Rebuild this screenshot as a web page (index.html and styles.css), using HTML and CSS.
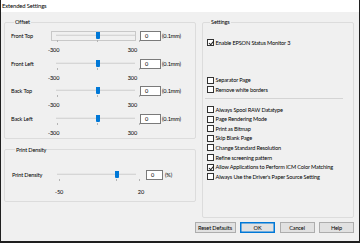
FILE: index.html
```html
<!DOCTYPE html>
<html lang="en">
<head>
  <meta charset="UTF-8">
  <title>Extended Settings</title>
  <link rel="stylesheet" href="styles.css">
</head>
<body>

  <div class="window">
    <div class="titlebar">Extended Settings</div>

    <div class="content">
      <div class="panels">
        <div class="left-col">

          <fieldset class="group offset">
            <legend>Offset</legend>

            <div class="slider-row">
              <span class="row-label">Front Top</span>
              <div class="slider focused">
                <div class="track"></div>
                <span class="tick" style="left:5px"></span>
                <span class="tick" style="left:45px"></span>
                <span class="tick" style="left:87px"></span>
                <div class="thumb" style="left:44px"></div>
              </div>
              <div class="numbox">0</div>
              <span class="unit">(0.1mm)</span>
              <div class="scale"><span>-300</span><span>300</span></div>
            </div>

            <div class="slider-row">
              <span class="row-label">Front Left</span>
              <div class="slider">
                <div class="track"></div>
                <span class="tick" style="left:5px"></span>
                <span class="tick" style="left:45px"></span>
                <span class="tick" style="left:87px"></span>
                <div class="thumb" style="left:44px"></div>
              </div>
              <div class="numbox">0</div>
              <span class="unit">(0.1mm)</span>
              <div class="scale"><span>-300</span><span>300</span></div>
            </div>

            <div class="slider-row">
              <span class="row-label">Back Top</span>
              <div class="slider">
                <div class="track"></div>
                <span class="tick" style="left:5px"></span>
                <span class="tick" style="left:45px"></span>
                <span class="tick" style="left:87px"></span>
                <div class="thumb" style="left:44px"></div>
              </div>
              <div class="numbox">0</div>
              <span class="unit">(0.1mm)</span>
              <div class="scale"><span>-300</span><span>300</span></div>
            </div>

            <div class="slider-row">
              <span class="row-label">Back Left</span>
              <div class="slider">
                <div class="track"></div>
                <span class="tick" style="left:5px"></span>
                <span class="tick" style="left:45px"></span>
                <span class="tick" style="left:87px"></span>
                <div class="thumb" style="left:44px"></div>
              </div>
              <div class="numbox">0</div>
              <span class="unit">(0.1mm)</span>
              <div class="scale"><span>-300</span><span>300</span></div>
            </div>
          </fieldset>

          <fieldset class="group density">
            <legend>Print Density</legend>

            <div class="slider-row">
              <span class="row-label">Print Density</span>
              <div class="slider">
                <div class="track"></div>
                <span class="tick" style="left:6px"></span>
                <span class="tick" style="left:63px"></span>
                <span class="tick" style="left:86px"></span>
                <div class="thumb" style="left:62px"></div>
              </div>
              <div class="numbox small">0</div>
              <span class="unit">(%)</span>
              <div class="scale"><span>-50</span><span>20</span></div>
            </div>
          </fieldset>

        </div>

        <fieldset class="group settings">
          <legend>Settings</legend>

          <label class="check top"><span class="box checked"></span>Enable EPSON Status Monitor 3</label>

          <div class="check-list spaced">
            <label class="check"><span class="box"></span>Separator Page</label>
            <label class="check"><span class="box"></span>Remove white borders</label>
          </div>

          <div class="separator"></div>

          <div class="check-list">
            <label class="check"><span class="box"></span>Always Spool RAW Datatype</label>
            <label class="check"><span class="box"></span>Page Rendering Mode</label>
            <label class="check"><span class="box"></span>Print as Bitmap</label>
            <label class="check"><span class="box"></span>Skip Blank Page</label>
            <label class="check"><span class="box"></span>Change Standard Resolution</label>
            <label class="check"><span class="box"></span>Refine screening pattern</label>
            <label class="check"><span class="box checked"></span>Allow Applications to Perform ICM Color Matching</label>
            <label class="check"><span class="box"></span>Always Use the Driver's Paper Source Setting</label>
          </div>
        </fieldset>
      </div>

      <div class="buttons">
        <button type="button" class="btn wide">Reset Defaults</button>
        <button type="button" class="btn default">OK</button>
        <button type="button" class="btn">Cancel</button>
        <button type="button" class="btn">Help</button>
      </div>
    </div>
  </div>

</body>
</html>
```

FILE: styles.css
```css
* {
  box-sizing: border-box;
}
body {
  margin: 0;
  font-family: Lato, "Noto Sans", sans-serif;
  font-size: 5.6px;
  letter-spacing: -0.14px;
  color: #000;
  background: #fff;
}
.window {
  width: 360px;
  height: 243px;
  border: 1px solid #1f1f1f;
  border-top: 0;
  border-bottom-width: 2px;
  background: #f0f0f0;
  display: flex;
  flex-direction: column;
}
.titlebar {
  height: 12px;
  background: #fff;
  padding: 2px 0 0 1px;
  font-size: 5.9px;
  line-height: 8px;
}
.content {
  flex: 1;
  padding: 6px 5px 0 3px;
  display: flex;
  flex-direction: column;
}
.panels {
  display: flex;
  gap: 6px;
}
.left-col {
  width: 192px;
  display: flex;
  flex-direction: column;
}

/* group boxes */
.group {
  margin: 0;
  min-width: 0;
  border: 1px solid #dcdcdc;
  border-radius: 2px;
}
.group legend {
  padding: 0 1px;
  margin-left: 3px;
  line-height: 8px;
}
.offset {
  padding: 5px 0 1px 6px;
}
.density {
  margin-top: 7px;
  padding: 16px 0 5px 7px;
}
.settings {
  width: 152px;
  height: 200px;
  padding: 12px 0 0 4px;
}

/* slider rows */
.slider-row {
  display: grid;
  grid-template-columns: 40px 89px 21px auto;
  grid-template-rows: 10px 8px;
  row-gap: 5px;
  align-items: center;
  margin-bottom: 4.5px;
}
.slider-row:last-child {
  margin-bottom: 0;
}
.row-label {
  line-height: 8px;
}
.slider {
  position: relative;
  height: 10px;
  margin-right: 4px;
  border: 1px solid transparent;
}
.slider.focused {
  border-color: #c8c8c8;
}
.track {
  position: absolute;
  left: 4px;
  right: 0;
  top: 2px;
  height: 2px;
  background: #e7e7e7;
  border: 1px solid #d6d6d6;
  border-width: 0 0 1px;
}
.tick {
  position: absolute;
  top: 8px;
  width: 1px;
  height: 2px;
  background: #b4b4b4;
}
.thumb {
  position: absolute;
  top: 0;
  width: 4px;
  height: 7px;
  background: #0078d7;
  border-radius: 0 0 1px 1px;
}
.numbox {
  width: 21px;
  height: 10px;
  background: #fff;
  border: 1px solid #7a7a7a;
  padding-left: 4px;
  line-height: 8px;
}
.numbox.small {
  width: 17px;
  margin-left: 5px;
}
.unit {
  padding-left: 1px;
  line-height: 8px;
}
.density .unit {
  padding-left: 3px;
}
.scale {
  grid-column: 2 / 3;
  display: flex;
  justify-content: space-between;
  margin-left: -3px;
  margin-right: 3px;
  line-height: 8px;
}
.density .slider-row {
  row-gap: 8px;
}
.density .scale {
  margin-left: 3px;
  margin-right: -3px;
}

/* checkboxes */
.check {
  display: flex;
  align-items: center;
  gap: 1.5px;
  height: 9.6px;
  line-height: 8px;
}
.check-list.spaced {
  margin-top: 28px;
}
.box {
  width: 7px;
  height: 7px;
  flex: none;
  border: 1px solid #333;
  background: #fff;
  position: relative;
}
.box.checked::after {
  content: "";
  position: absolute;
  left: 1.5px;
  top: 0;
  width: 2px;
  height: 3.5px;
  border: solid #222;
  border-width: 0 1px 1px 0;
  transform: rotate(40deg);
}
.separator {
  height: 1px;
  width: 138px;
  margin: 3.5px 0 5.5px -2px;
  background: #d4d4d4;
}

/* buttons */
.buttons {
  display: flex;
  justify-content: flex-end;
  gap: 4.5px;
  margin-top: 4px;
}
.btn {
  width: 35px;
  height: 11px;
  padding: 0;
  font-family: inherit;
  font-size: 5.6px;
  letter-spacing: inherit;
  color: #000;
  background: #e1e1e1;
  border: 1px solid #adadad;
  border-radius: 0;
}
.btn.wide {
  width: 41px;
}
.btn.default {
  border-color: #0078d7;
  box-shadow: inset 0 0 0 0.5px #0078d7;
}
```
